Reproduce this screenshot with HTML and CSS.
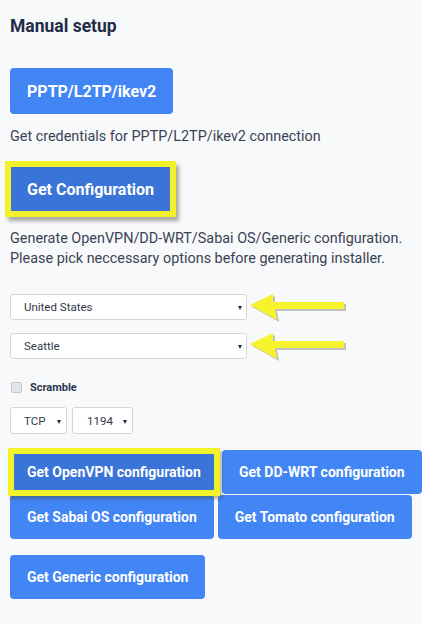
FILE: index.html
```html
<!DOCTYPE html>
<html>
<head>
<meta charset="utf-8">
<link rel="stylesheet" href="styles.css">
</head>
<body>
<main class="page">
  <h2 class="title">Manual setup</h2>
  <button class="btn btn-tall">PPTP/L2TP/ikev2</button>
  <p class="text t-cred">Get credentials for PPTP/L2TP/ikev2 connection</p>
  <button class="btn btn-tall hl-big">Get Configuration</button>
  <p class="text t-gen">Generate OpenVPN/DD-WRT/Sabai OS/Generic configuration.<br>Please pick neccessary options before generating installer.</p>

  <div class="sel-row r1">
    <div class="sel sel-wide"><span class="sel-val">United States</span><span class="caret"></span></div>
    <svg class="arrow" width="100" height="30" viewBox="0 0 100 30">
      <polygon points="4,15 27,4 27,12 98,12 98,19 29,19 31,30" fill="#7d7d70" opacity="0.45"/>
      <polygon points="2,13 25,2 25,10 96,10 96,17 27,17 29,28" fill="#f6f32c"/>
    </svg>
  </div>
  <div class="sel-row r2">
    <div class="sel sel-wide"><span class="sel-val">Seattle</span><span class="caret"></span></div>
    <svg class="arrow" width="100" height="30" viewBox="0 0 100 30">
      <polygon points="4,15 27,4 27,12 98,12 98,19 29,19 31,30" fill="#7d7d70" opacity="0.45"/>
      <polygon points="2,13 25,2 25,10 96,10 96,17 27,17 29,28" fill="#f6f32c"/>
    </svg>
  </div>

  <label class="check"><span class="box"></span><span class="check-label">Scramble</span></label>

  <div class="small-sels">
    <div class="sel sel-tcp"><span class="sel-val">TCP</span><span class="caret"></span></div>
    <div class="sel sel-port"><span class="sel-val">1194</span><span class="caret"></span></div>
  </div>

  <div class="btn-grid">
    <button class="btn btn-row hl-small">Get OpenVPN configuration</button>
    <button class="btn btn-row btn-ddwrt">Get DD-WRT configuration</button>
    <button class="btn btn-row">Get Sabai OS configuration</button>
    <button class="btn btn-row">Get Tomato configuration</button>
  </div>
  <button class="btn btn-row btn-generic">Get Generic configuration</button>
</main>
</body>
</html>
```

FILE: styles.css
```css
html, body {
  margin: 0;
  padding: 0;
  background: #f8f9fa;
}
body {
  font-family: Roboto, "Liberation Sans", sans-serif;
  color: #3b4254;
}
.page {
  padding: 16px 0 0 10px;
  width: 412px;
  overflow: hidden;
}
.title {
  margin: 0;
  font-size: 17.5px;
  line-height: 20px;
  font-weight: 700;
  color: #1f2c48;
}
.btn {
  display: block;
  border: none;
  border-radius: 4px;
  background: #4285f4;
  color: #fff;
  font-family: Roboto, "Liberation Sans", sans-serif;
  font-weight: 700;
  padding: 0 17px;
  cursor: pointer;
  white-space: nowrap;
}
.btn-tall {
  height: 46px;
  font-size: 16px;
  margin-top: 32px;
}
.text {
  margin: 0;
  font-size: 14.4px;
  line-height: 20px;
}
.t-cred { margin-top: 13px; }
.hl-big {
  margin-top: 19px;
  height: 46px;
  background: #3a74d8;
  border-radius: 0;
  box-shadow: inset 0 0 0 1px #f3f12a, 0 0 0 5px #f3f12a, 3px 4px 4px 5px rgba(70, 70, 50, 0.45);
}
.t-gen { margin-top: 17px; }

.sel-row {
  display: flex;
  align-items: center;
  height: 26px;
}
.r1 { margin-top: 25px; }
.r2 { margin-top: 13px; }
.arrow {
  display: block;
  margin-left: 1px;
  flex: none;
}
.sel {
  position: relative;
  box-sizing: border-box;
  height: 26px;
  background: #fff;
  border: 1px solid #d3d5d9;
  border-radius: 3px;
  display: flex;
  align-items: center;
  font-size: 11.5px;
  color: #333845;
  flex: none;
}
.sel-wide {
  width: 237px;
  padding-left: 13px;
}
.caret {
  position: absolute;
  right: 4px;
  top: 11px;
  width: 0;
  height: 0;
  border-left: 2.5px solid transparent;
  border-right: 2.5px solid transparent;
  border-top: 4px solid #1f2c48;
}
.check {
  display: flex;
  align-items: center;
  margin-top: 20px;
  height: 16px;
}
.box {
  box-sizing: border-box;
  width: 11px;
  height: 11px;
  margin-left: 1px;
  border: 1px solid #c5c7cb;
  background: #e4e5e8;
  border-radius: 2px;
}
.check-label {
  margin-left: 8px;
  font-size: 11px;
  font-weight: 700;
  color: #2b3550;
}
.small-sels {
  display: flex;
  gap: 5px;
  margin-top: 12px;
}
.small-sels .sel {
  height: 27px;
}
.small-sels .caret { top: 12px; right: 5px; }
.sel-tcp {
  width: 57px;
  padding-left: 13px;
}
.sel-port {
  width: 61px;
  padding-left: 14px;
}
.btn-grid {
  display: flex;
  flex-wrap: wrap;
  column-gap: 4px;
  row-gap: 1px;
  margin-top: 16px;
  width: 420px;
}
.btn-row {
  height: 44px;
  font-size: 14px;
}
.btn-ddwrt {
  min-width: 200px;
}
.hl-small {
  background: #3a74d8;
  border-radius: 0;
  box-shadow: inset 0 0 0 4px #f3f12a, 0 0 0 2px #f3f12a, 2px 3px 3px 2px rgba(70, 70, 50, 0.4);
  position: relative;
  z-index: 1;
}
.btn-generic {
  margin-top: 16px;
}
```
